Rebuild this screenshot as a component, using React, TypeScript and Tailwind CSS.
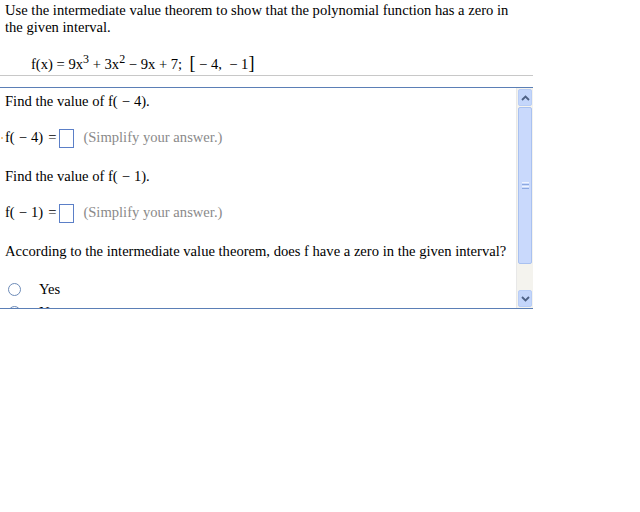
import React from "react";

const serif = { fontFamily: '"Liberation Serif", "Times New Roman", serif' };

function Neg({ n }: { n: string }) {
  return (
    <>
      <span className="ml-[4px]">−</span>
      <span className="ml-[4px]">{n}</span>
    </>
  );
}

function AnswerRow({ arg }: { arg: string }) {
  return (
    <div className="flex items-center h-[20px] text-black">
      <span>f(</span>
      <Neg n={arg} />
      <span>)</span>
      <span className="ml-[5px]">=</span>
      <span className="ml-[3px] inline-block w-[15px] h-[19px] border border-[#5b7fc7] bg-white" />
      <span className="ml-[9px] text-[#8a8a8a]">(Simplify your answer.)</span>
    </div>
  );
}

function Scrollbar() {
  return (
    <div className="w-[17px] h-full flex flex-col bg-[#f4f3ee] border-l border-[#e8e8e8]">
      <div className="h-[17px] mx-[1px] mt-[1px] rounded-[2px] border border-[#b8cdf6] bg-[#c4d6fb] flex items-center justify-center">
        <svg width="9" height="6" viewBox="0 0 9 6">
          <path d="M1 5 L4.5 1.5 L8 5" stroke="#4d6185" strokeWidth="1.8" fill="none" />
        </svg>
      </div>
      <div className="h-[157px] mx-[1px] mt-[1px] rounded-[2px] border border-[#a9c1f0] bg-[#c9d9fc] flex items-center justify-center">
        <div className="flex flex-col gap-[1px]">
          <div className="w-[7px] h-[1px] bg-[#eef3fe]" />
          <div className="w-[7px] h-[1px] bg-[#8ca8e0]" />
          <div className="w-[7px] h-[1px] bg-[#eef3fe]" />
          <div className="w-[7px] h-[1px] bg-[#8ca8e0]" />
        </div>
      </div>
      <div className="flex-1" />
      <div className="h-[17px] mx-[1px] mb-[1px] rounded-[2px] border border-[#b8cdf6] bg-[#c4d6fb] flex items-center justify-center">
        <svg width="9" height="6" viewBox="0 0 9 6">
          <path d="M1 1 L4.5 4.5 L8 1" stroke="#4d6185" strokeWidth="1.8" fill="none" />
        </svg>
      </div>
    </div>
  );
}

export default function App() {
  return (
    <div className="w-[640px] h-[512px] bg-white text-black text-[14.6px]" style={serif}>
      <div className="w-[533px]">
        <div className="pl-[5px] pt-[2px] pr-[20px] leading-[17px]">
          Use the intermediate value theorem to show that the polynomial function has a zero in the given interval.
        </div>
        <div className="pl-[31px] mt-[16px] h-[22px] leading-[22px] whitespace-pre">
          {"f(x) = 9x"}
          <sup className="text-[12px]">3</sup>
          {" + 3x"}
          <sup className="text-[12px]">2</sup>
          {" − 9x + 7;  "}
          <span className="text-[18px]">[</span>
          {" − 4,  − 1"}
          <span className="text-[18px]">]</span>
        </div>
        <div className="mt-[1px] h-px bg-[#c8c8c8]" />
        <div className="mt-[11px] h-[222px] border-t border-b border-[#5b7fb6] flex overflow-hidden">
          <div className="flex-1 pl-[5px] pt-[5px] flex flex-col">
            <div className="h-[16px] leading-[16px] flex">
              <span className="whitespace-pre">{"Find the value of f("}</span>
              <Neg n="4" />
              <span>).</span>
            </div>
            <div className="mt-[19px] relative">
              <span className="absolute -left-[4px] top-[9px] w-[2px] h-[2px] bg-[#f0c080]" />
              <AnswerRow arg="4" />
            </div>
            <div className="mt-[20px] h-[16px] leading-[16px] flex">
              <span className="whitespace-pre">{"Find the value of f("}</span>
              <Neg n="1" />
              <span>).</span>
            </div>
            <div className="mt-[19px]">
              <AnswerRow arg="1" />
            </div>
            <div className="mt-[20px] h-[16px] leading-[16px] whitespace-nowrap">
              According to the intermediate value theorem, does f have a zero in the given interval?
            </div>
            <div className="mt-[22px] h-[16px] flex items-center">
              <span className="ml-[3px] w-[13px] h-[13px] rounded-full border border-[#6d8bb8] bg-white" />
              <span className="ml-[18px] leading-[16px]">Yes</span>
            </div>
            <div className="mt-[7px] h-[16px] flex items-center">
              <span className="ml-[3px] w-[13px] h-[13px] rounded-full border border-[#6d8bb8] bg-white" />
              <span className="ml-[18px] leading-[16px]">No</span>
            </div>
          </div>
          <Scrollbar />
        </div>
      </div>
    </div>
  );
}
